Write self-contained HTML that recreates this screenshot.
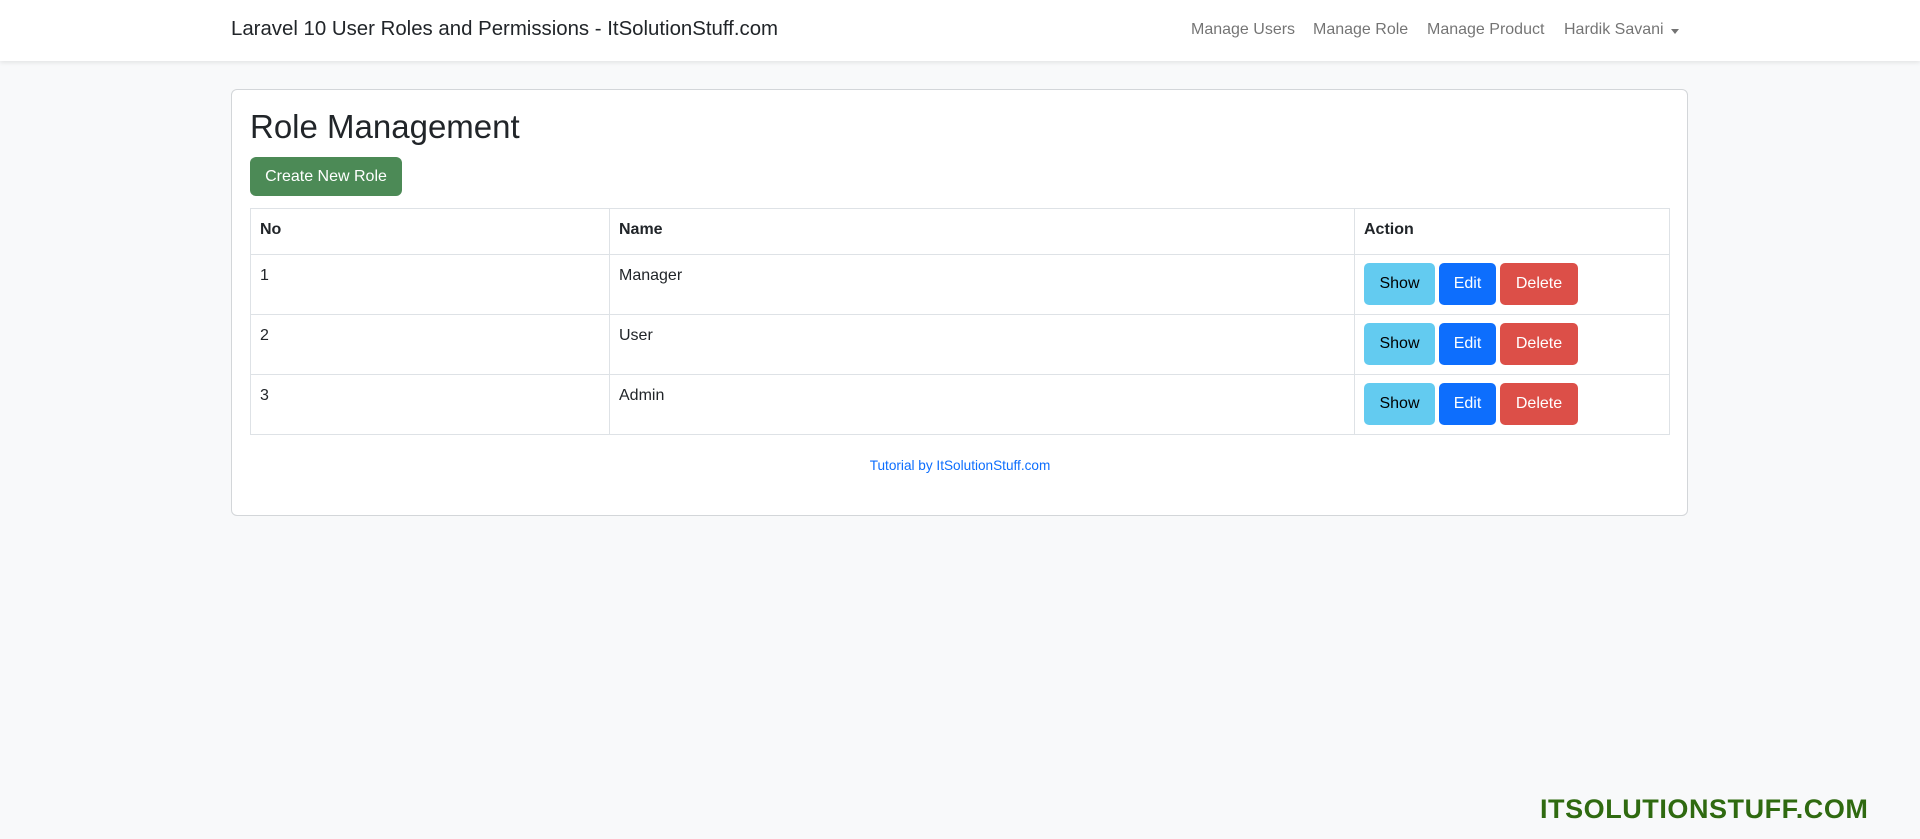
<!DOCTYPE html>
<html><head><meta charset="utf-8"><style>
*{box-sizing:border-box;margin:0;padding:0}
body{width:1920px;height:839px;background:#f8f9fa;font-family:"Liberation Sans",sans-serif;color:#212529;position:relative;overflow:hidden}
.nav{position:absolute;left:0;top:0;width:1920px;height:61px;background:#fff;box-shadow:0 2px 4px rgba(0,0,0,.08)}
.brand{position:absolute;left:231px;top:18px;font-size:20.4px;color:#212529}
.nl{position:absolute;top:21px;font-size:16px;color:rgba(0,0,0,.55)}
.caret{position:absolute;left:1671px;top:29px;width:0;height:0;border-left:4px solid transparent;border-right:4px solid transparent;border-top:5px solid rgba(0,0,0,.55)}
.card{position:absolute;left:231px;top:89px;width:1457px;height:427px;background:#fff;border:1px solid #d3d6d9;border-radius:6px}
h2{position:absolute;left:250px;top:108px;font-size:33px;font-weight:400;color:#212529}
.create{position:absolute;left:250px;top:157px;width:152px;height:39px;background:#4c8a56;color:#fff;border-radius:6px;font-size:16px;line-height:39px;text-align:center}
table{position:absolute;left:250px;top:208px;width:1420px;border-collapse:collapse;font-size:16px}
td,th{border:1px solid #dee2e6;text-align:left;vertical-align:top;padding:12px 9px 10px}
th{height:46px;font-weight:700}
td{height:60px}
.b{display:inline-block;height:42px;line-height:42px;border-radius:5px;font-size:16px;text-align:center;margin-right:4px;vertical-align:top}
.show{width:71px;background:#63cbf0;color:#000}
.edit{width:57px;background:#0d6efd;color:#fff}
.del{width:78px;background:#dc4f48;color:#fff}
td.a{padding:8px 9px}
.tut{position:absolute;left:0;width:1920px;top:458px;text-align:center;font-size:13.6px;color:#0d6efd}
.wm{position:absolute;left:1540px;top:794px;font-size:27px;font-weight:700;color:#2f6a10;letter-spacing:0.55px;white-space:nowrap}
</style></head><body>
<div class="nav">
<div class="brand">Laravel 10 User Roles and Permissions - ItSolutionStuff.com</div>
<div class="nl" style="left:1191px">Manage Users</div>
<div class="nl" style="left:1313px">Manage Role</div>
<div class="nl" style="left:1427px">Manage Product</div>
<div class="nl" style="left:1564px">Hardik Savani</div>
<div class="caret"></div>
</div>
<div class="card"></div>
<h2>Role Management</h2>
<div class="create">Create New Role</div>
<table>
<tr><th style="width:359px">No</th><th style="width:745px">Name</th><th>Action</th></tr>
<tr><td>1</td><td>Manager</td><td class="a"><span class="b show">Show</span><span class="b edit">Edit</span><span class="b del">Delete</span></td></tr>
<tr><td>2</td><td>User</td><td class="a"><span class="b show">Show</span><span class="b edit">Edit</span><span class="b del">Delete</span></td></tr>
<tr><td>3</td><td>Admin</td><td class="a"><span class="b show">Show</span><span class="b edit">Edit</span><span class="b del">Delete</span></td></tr>
</table>
<div class="tut">Tutorial by ItSolutionStuff.com</div>
<div class="wm">ITSOLUTIONSTUFF.COM</div>
</body></html>
